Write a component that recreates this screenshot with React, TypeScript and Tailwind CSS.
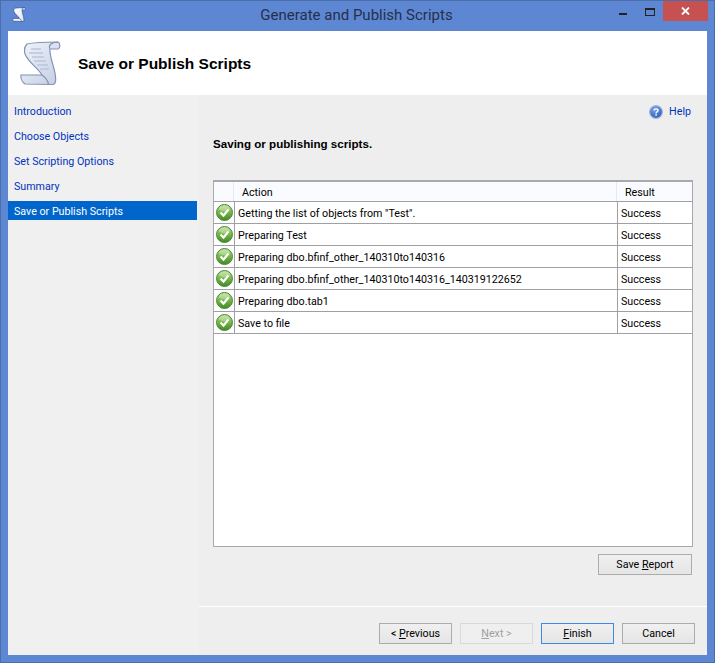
const font = "font-['Roboto','Liberation_Sans',Arial,sans-serif]";
const boldFont = "font-['Liberation_Sans',Arial,sans-serif]";

const steps = [
  'Getting the list of objects from "Test".',
  "Preparing Test",
  "Preparing dbo.bfinf_other_140310to140316",
  "Preparing dbo.bfinf_other_140310to140316_140319122652",
  "Preparing dbo.tab1",
  "Save to file",
];

const navItems = ["Introduction", "Choose Objects", "Set Scripting Options", "Summary", "Save or Publish Scripts"];

function ScrollIcon({ width, height, small }: { width: number; height: number; small?: boolean }) {
  const id = small ? "scrollS" : "scrollL";
  const line = small ? "#2f4f8e" : "#8493b4";
  return (
    <svg width={width} height={height} viewBox="20 40 41 46" fill="none">
      <defs>
        <linearGradient id={id} x1="0" y1="0" x2="1" y2="1">
          <stop offset="0" stopColor={small ? "#ffffff" : "#f1f4fb"} />
          <stop offset="1" stopColor={small ? "#dfe4ee" : "#c3cee4"} />
        </linearGradient>
      </defs>
      <path
        d="M27 44 C36 42 50 42 58 42 C60.5 43 60.5 48 58 49 L50 49 C49 56 55 68 55.5 77 C56 81 55 84 53 84.5 L25 84 C22 82 20.5 78 21 75 L42 75 C38 68 28 62 25 54 C24 50 25 46 27 44 Z"
        fill={`url(#${id})`}
        stroke={line}
        strokeWidth={small ? 2 : 1.2}
      />
      <path d="M50 49 C48 45 52 42 58 42" stroke={line} strokeWidth={small ? 2 : 1.2} />
      <path d="M42 75 C46 78 48 81 48.5 84.3" stroke={line} strokeWidth={small ? 2 : 1.2} />
      {!small && (
        <path d="M31 49 H41 M29 53 H43 M32 57 H44 M34 61 H46 M37 65 H48 M40 69 H49" stroke="#bcc6db" strokeWidth="1.4" />
      )}
    </svg>
  );
}

function CheckIcon() {
  return (
    <svg width="17" height="17" viewBox="0 0 17 17">
      <defs>
        <linearGradient id="okGreen" x1="0" y1="0" x2="0" y2="1">
          <stop offset="0" stopColor="#b5dd8e" />
          <stop offset="0.5" stopColor="#74b545" />
          <stop offset="1" stopColor="#3f8a28" />
        </linearGradient>
      </defs>
      <circle cx="8.5" cy="8.5" r="8" fill="url(#okGreen)" stroke="#4f8a3a" strokeWidth="1" />
      <ellipse cx="8.5" cy="4.5" rx="5.5" ry="3" fill="#ffffff" opacity="0.3" />
      <path d="M4.5 8.5 L7.5 11.5 L12.5 5.5" fill="none" stroke="#ffffff" strokeWidth="2.2" />
    </svg>
  );
}

function HelpIcon() {
  return (
    <svg width="14" height="14" viewBox="0 0 15 15">
      <defs>
        <radialGradient id="helpBlue" cx="0.4" cy="0.3" r="0.8">
          <stop offset="0" stopColor="#7fa8ea" />
          <stop offset="1" stopColor="#1c50b0" />
        </radialGradient>
      </defs>
      <circle cx="7.5" cy="7.5" r="6.8" fill="url(#helpBlue)" stroke="#9db4dc" strokeWidth="1.2" />
      <path d="M5.4 5.8 C5.6 3.6 9.7 3.6 9.7 5.8 C9.7 7.3 7.6 7.3 7.6 9" fill="none" stroke="#ffffff" strokeWidth="1.5" />
      <rect x="6.8" y="10" width="1.6" height="1.6" fill="#ffffff" />
    </svg>
  );
}

function Btn({ children, width, variant }: { children: React.ReactNode; width: string; variant?: "disabled" | "default" }) {
  const border =
    variant === "disabled" ? "border-[#d9d9d9] text-[#a0a0a0] bg-[#efefef]" : variant === "default" ? "border-[#3c8ae6] text-black bg-gradient-to-b from-[#f0f0f0] to-[#e5e5e5]" : "border-[#acacac] text-black bg-gradient-to-b from-[#f0f0f0] to-[#e5e5e5]";
  return (
    <div className={`${width} h-[21px] border flex items-center justify-center ${border}`}>
      <span className="pt-[2px]">{children}</span>
    </div>
  );
}

export default function App() {
  return (
    <div className={`${font} w-[715px] h-[663px] bg-[#5d87d3] border border-[#4a6ea8] flex flex-col overflow-hidden text-[10.7px] text-black`}>
      {/* Title bar */}
      <div className="h-[30px] flex items-start shrink-0 pl-[11px]">
        <div className="mt-[6px] w-[14px]">
          <ScrollIcon width={14} height={15} small />
        </div>
        <div className="flex-1 text-center text-[15px] leading-[18px] mt-[5px] text-[#25304a] pl-[68px]">
          Generate and Publish Scripts
        </div>
        <div className="flex items-start">
          <div className="w-[8px] h-[2px] bg-[#222222] mt-[12px] mr-[18px]" />
          <div className="w-[8px] h-[5px] border border-[#222222] border-t-[2px] mt-[7px] mr-[8px] box-content" />
          <div className="w-[45px] h-[20px] bg-[#c75050] flex items-center justify-center mr-[6px]">
            <svg width="9" height="8" viewBox="0 0 9 8">
              <path d="M1 0.5 L8 7.5 M8 0.5 L1 7.5" stroke="#ffffff" strokeWidth="1.8" />
            </svg>
          </div>
        </div>
      </div>

      {/* Client area */}
      <div className="ml-[7px] mr-[7px] mb-[7px] h-[624px] flex flex-col bg-[#f0f0f0] border-0">
        <div className="h-[64px] bg-white flex items-center shrink-0">
          <div className="ml-[12px] w-[58px]">
            <ScrollIcon width={41} height={46} />
          </div>
          <div className={`${boldFont} text-[15.5px] font-bold leading-none pt-[1px]`}>Save or Publish Scripts</div>
        </div>

        <div className="flex flex-1 min-h-0">
          {/* Sidebar */}
          <div className="w-[189px] bg-[#f0f0f0] pt-[6px] flex flex-col shrink-0">
            {navItems.map((item, i) => (
              <div
                key={item}
                className={`h-[19px] pt-[1px] leading-[19px] pl-[6px] ${i < 4 ? "mb-[6px] text-[#0033bc]" : "bg-[#0066cc] text-white"}`}
              >
                {item}
              </div>
            ))}
          </div>

          {/* Main panel */}
          <div className="flex-1 ml-[2px] bg-[#eeeeee] flex flex-col">
            <div className="flex-1 flex flex-col px-[14px] min-h-0 border-b border-white">
              <div className="flex justify-end items-center gap-[6px] pt-[9px] h-[24px] mr-[2px] leading-[16px]">
                <HelpIcon />
                <span className="text-[#0033bc] pt-[1px]">Help</span>
              </div>
              <div className={`${boldFont} text-[11.6px] font-bold mt-[17px] leading-[15px]`}>Saving or publishing scripts.</div>

              {/* Results grid */}
              <div className="mt-[29px] h-[367px] border border-[#a9a9ad] border-t-2 bg-white flex flex-col">
                <div className="h-[19px] flex bg-[#fafbfe] border-b border-[#a0a0a4] box-content shrink-0">
                  <div className="w-[20px] border-r border-[#e3e8f4]" />
                  <div className="flex-1 pl-[8px] pt-[1px] leading-[19px] border-r border-[#e3e8f4]">Action</div>
                  <div className="w-[75px] pl-[8px] pt-[1px] leading-[19px]">Result</div>
                </div>
                {steps.map((step) => (
                  <div key={step} className="h-[21px] flex border-b border-[#a0a0a4] box-content shrink-0">
                    <div className="w-[21px] border-r border-[#a0a0a4] flex items-center justify-center">
                      <CheckIcon />
                    </div>
                    <div className="flex-1 pl-[3px] pt-[1px] leading-[21px] whitespace-nowrap overflow-hidden">{step}</div>
                    <div className="w-[75px] border-l border-[#a0a0a4] pl-[3px] pt-[1px] leading-[21px]">Success</div>
                  </div>
                ))}
              </div>

              <div className="flex justify-end mt-[7px] mr-[1px]">
                <Btn width="w-[94px]">
                  Save <span className="underline">R</span>eport
                </Btn>
              </div>
            </div>

            {/* Wizard buttons */}
            <div className="h-[48px] shrink-0 flex justify-end items-start gap-[8px] pt-[16px] pr-[12px]">
              <Btn width="w-[73px]">
                &lt; <span className="underline">P</span>revious
              </Btn>
              <Btn width="w-[73px]" variant="disabled">
                <span className="underline">N</span>ext &gt;
              </Btn>
              <Btn width="w-[73px]" variant="default">
                <span className="underline">F</span>inish
              </Btn>
              <Btn width="w-[73px]">Cancel</Btn>
            </div>
          </div>
        </div>
      </div>
    </div>
  );
}
